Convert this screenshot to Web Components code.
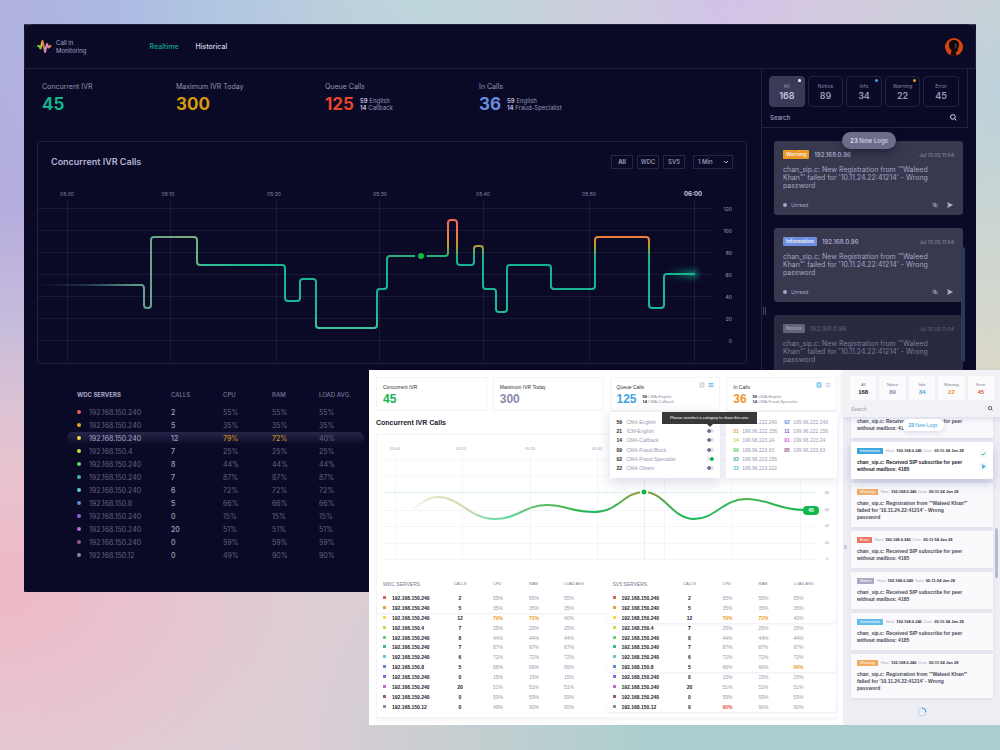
<!DOCTYPE html>
<html lang="en">
<head>
<meta charset="utf-8">
<title>Call in Monitoring</title>
<style>
body { margin: 0; }
</style>
</head>
<body>
<monitor-desktop></monitor-desktop>
<script>
function component(tag, css, markup) {
  const template = document.createElement('template');
  customElements.define(tag, class extends HTMLElement {
    connectedCallback() {
      if (this.shadowRoot) return;
      const root = this.attachShadow({ mode: 'open' });
      template.innerHTML = `<style>*{box-sizing:border-box}${css}</style>` + markup(this);
      root.append(template.content.cloneNode(true));
    }
  });
}

const DOTS = ['#d9694c', '#eaa13a', '#f1dc4b', '#c0e04a', '#65d66b', '#3fb8a0', '#5fc9d6', '#6488dd', '#8e63dc', '#cc66d8', '#97588f', '#8a8aa8'];
const SERVERS = [
  ['192.168.150.240', 2, '55%', '55%', '55%'], ['192.168.150.240', 5, '35%', '35%', '35%'],
  ['192.168.150.240', 12, '79%', '72%', '40%'], ['192.168.150.4', 7, '25%', '25%', '25%'],
  ['192.168.150.240', 8, '44%', '44%', '44%'], ['192.168.150.240', 7, '87%', '87%', '87%'],
  ['192.168.150.240', 6, '72%', '72%', '72%'], ['192.168.150.8', 5, '66%', '66%', '66%'],
  ['192.168.150.240', 0, '15%', '15%', '15%'], ['192.168.150.240', 20, '51%', '51%', '51%'],
  ['192.168.150.240', 0, '59%', '59%', '59%'], ['192.168.150.12', 0, '49%', '90%', '90%']
];

/* ---------- brand and navigation ---------- */
component('brand-mark', `
  :host{display:flex;align-items:center;gap:4px;font-size:6px;line-height:8px;color:#a3a2c0}
  svg{width:15px;height:15px;display:block}
`, () => `
  <svg viewBox="0 0 30 30" fill="none" stroke-width="4" stroke-linejoin="round" stroke-linecap="round" aria-hidden="true">
    <defs><linearGradient id="g" x1="0" x2="1"><stop offset="0" stop-color="#58c84c"/><stop offset=".2" stop-color="#8fc83c"/><stop offset=".3" stop-color="#f0b429"/><stop offset=".45" stop-color="#ee6a3a"/><stop offset=".62" stop-color="#b79ae8"/><stop offset=".8" stop-color="#e8798a"/><stop offset="1" stop-color="#f09a4a"/></linearGradient></defs>
    <path stroke="url(#g)" d="M2 14l2 0 3 5 4-15 5 22 4-16 3 7 4-3"/>
  </svg>
  <span>Call in<br>Monitoring</span>`);

component('user-avatar', `
  :host{display:block}
  svg{display:block;width:18px;height:18px}
`, () => `
  <svg viewBox="0 0 36 36" role="img" aria-label="Profile"><circle cx="18" cy="18" r="18" fill="#d4450f"/>
  <path fill="#15090c" d="M8 15c-1-8 5-12 12-11 6 1 9 6 8 12l-2 6c0 4-2 6-5 7l3 6q-6 2-13-1l2-9c-3-3-5-6-5-10z"/>
  <path fill="#5b5050" d="M20 11l4 1-1 5 1 3-3 2-2-5z" opacity=".6"/></svg>`);

component('top-bar', `
  :host{display:flex;align-items:center;height:45px;padding:0 12px;border:1px solid #1e1e3b;border-radius:9px 9px 0 0;box-sizing:border-box}
  nav{display:flex;gap:17px;flex:1;padding-left:63px;font-size:7px;font-weight:500}
  a{color:#dcdbea;text-decoration:none}
  a[aria-current]{color:#12a386}
`, () => `
  <brand-mark></brand-mark>
  <nav><a href="#realtime" aria-current="page">Realtime</a><a href="#historical">Historical</a></nav>
  <user-avatar></user-avatar>`);

/* ---------- figures at the top ---------- */
component('stat-figure', `
  :host{display:block;color:#9695b3}
  h3{margin:0 0 2px;font-size:7px;line-height:10px;font-weight:400}
  div{display:flex;align-items:center;gap:6px;height:20px}
  strong{font-size:17px;line-height:20px;font-weight:700;color:var(--figure)}
  slot{display:block;font-size:6px;line-height:7px}
`, el => `<h3>${el.getAttribute('label')}</h3><div><strong>${el.getAttribute('value')}</strong><slot></slot></div>`);

/* ---------- dark chart ---------- */
component('step-chart', `
  :host{display:block}
  svg{display:block;width:100%;height:auto}
  text{font-size:5px;fill:#8d8cab;text-anchor:middle}
  .y text{font-weight:500;text-anchor:end}
  .now{font-size:6px;font-weight:700;fill:#c9c8e2}
  .grid path{stroke:#8c8cc8;stroke-opacity:.12}
`, () => {
  const xs = [67, 170, 276, 379, 483, 589, 694], ys = [208, 230, 252, 274, 296, 318, 340];
  const pts = [[40, 285], [144, 285], [144, 308], [151, 308], [151, 237], [197, 237], [197, 265], [285, 265], [285, 301], [300, 301], [300, 279], [316, 279], [316, 328], [377, 328], [377, 289], [387, 289], [387, 256], [448, 256], [448, 220], [457, 220], [457, 265], [474, 265], [474, 246], [483, 246], [483, 289], [496, 289], [496, 312], [507, 312], [507, 265], [551, 265], [551, 289], [595, 289], [595, 237], [649, 237], [649, 308], [664, 308], [664, 274], [695, 274]];
  let d = `M${pts[0]}`;
  for (let i = 1; i < pts.length - 1; i++) {
    const [ax, ay] = pts[i - 1], [x, y] = pts[i], [bx, by] = pts[i + 1], r = 3;
    d += `L${x - Math.sign(x - ax) * r} ${y - Math.sign(y - ay) * r}Q${x} ${y} ${x + Math.sign(bx - x) * r} ${y + Math.sign(by - y) * r}`;
  }
  d += `L${pts[pts.length - 1]}`;
  return `<svg viewBox="38 169 708 194" role="img" aria-label="Concurrent IVR calls from 05:00 to 06:00">
    <defs>
      <linearGradient id="v" gradientUnits="userSpaceOnUse" x1="0" x2="0" y1="218" y2="330">
        <stop offset="0" stop-color="#ee6258"/><stop offset=".17" stop-color="#ee8040"/><stop offset=".21" stop-color="#d89428"/><stop offset=".26" stop-color="#a5a036"/><stop offset=".33" stop-color="#2cb07c"/><stop offset=".42" stop-color="#12b48f"/><stop offset=".85" stop-color="#1db993"/><stop offset="1" stop-color="#42c79f"/>
      </linearGradient>
      <linearGradient id="h" gradientUnits="userSpaceOnUse" x1="38" x2="290" y1="0" y2="0">
        <stop offset="0" stop-color="#5f9f93" stop-opacity="0"/><stop offset=".18" stop-color="#5f9f93" stop-opacity=".25"/><stop offset=".4" stop-color="#5f9f93"/><stop offset=".62" stop-color="#7fae78"/><stop offset=".66" stop-color="#2fbd98"/><stop offset="1" stop-color="#12b48f"/>
      </linearGradient>
      <clipPath id="a"><path d="M38 169h247v193H38z"/></clipPath><clipPath id="b"><path d="M285 169h461v193H285z"/></clipPath>
      <filter id="glow" x="-50%" y="-400%" width="200%" height="900%"><feGaussianBlur stdDeviation="3"/></filter>
      <linearGradient id="e" x1="0" x2="1"><stop offset="0" stop-color="#12b48f" stop-opacity="0"/><stop offset="1" stop-color="#14d2a0" stop-opacity=".8"/></linearGradient>
    </defs>
    <g class="grid">${ys.map(y => `<path d="M38 ${y}.5H712"/>`).join('')}${xs.map(x => `<path d="M${x}.5 200V362"/>`).join('')}</g>
    <rect x="668" y="271" width="29" height="6" fill="url(#e)" filter="url(#glow)"/>
    <g fill="none" stroke-width="2"><path clip-path="url(#a)" stroke="url(#h)" d="${d}"/><path clip-path="url(#b)" stroke="url(#v)" d="${d}"/></g>
    <circle cx="421" cy="256" r="6" fill="#0a0a26"/><circle cx="421" cy="256" r="3" fill="#10b94b"/>
    ${[67, 168, 274, 380, 483, 589].map((x, i) => `<text x="${x}" y="196">05:${i}0</text>`).join('')}
    <text class="now" x="693" y="196">06:00</text>
    <g class="y">${ys.map((y, i) => `<text x="732" y="${y + 3}">${120 - i * 20}</text>`).join('')}</g>
  </svg>`;
});

component('chart-panel', `
  :host{display:block;margin:0 14px 0 13px;border:1px solid #22223e;border-radius:4px}
  header{display:flex;align-items:center;gap:4px;padding:13px 13px 0}
  h2{flex:1;margin:0;font-size:9px;line-height:14px;font-weight:600;color:#b4b3d4}
  button,select{height:14px;border:1px solid #26263f;background:none;color:#a3a2c0;font:500 6px/8px Inter,sans-serif;padding:0;border-radius:0}
  button{width:22px}
  button:first-of-type{color:#c9c8e2}
  label{position:relative;margin-left:4px;display:block}
  select{appearance:none;width:40px;padding:0 4px;display:block}
  svg{position:absolute;right:4px;top:5px;width:6px;height:4px;pointer-events:none}
`, () => `
  <header><h2>Concurrent IVR Calls</h2>
    <button>All</button><button>WDC</button><button>SV5</button>
    <label><select aria-label="Interval"><option>1 Min</option></select>
    <svg viewBox="0 0 6 4" fill="none" stroke="#a3a2c0"><path d="M1 1l2 2 2-2"/></svg></label>
  </header>
  <step-chart></step-chart>`);

component('dark-servers', `
  :host{display:block;padding:18px 0 30px 43px}
  table{border-collapse:collapse;table-layout:fixed;width:297px;font-size:7px;line-height:9px;color:#62627f}
  th{height:24px;padding:0;text-align:left;font-size:6px;font-weight:500;color:#77769a}
  th:first-child{padding-left:10px;font-weight:700;color:#a9a8c9}
  td{height:13px;padding:0}
  td:first-child{padding-left:10px}
  td:nth-child(2){color:#a3a2c4;font-weight:500}
  i{display:inline-block;width:4px;height:4px;border-radius:50%;margin-right:8px;vertical-align:1px}
  .on td{background:linear-gradient(#26264a,#0a0a26)}
  .on td:first-child{border-radius:6px 0 0 6px;color:#a9a8c9}
  .on td:last-child{border-radius:0 6px 6px 0}
  .on td:nth-child(3),.on td:nth-child(4){color:#c98a1c;font-weight:500}
`, () => `<table><colgroup><col style="width:104px"><col style="width:52px"><col style="width:49px"><col style="width:47px"><col></colgroup>
  <thead><tr><th>WDC SERVERS</th><th>CALLS</th><th>CPU</th><th>RAM</th><th>LOAD AVG.</th></tr></thead>
  <tbody>${SERVERS.map((r, i) => `<tr${i == 2 ? ' class="on"' : ''}><td><i style="background:${DOTS[i]}"></i>${r[0]}</td>${r.slice(1).map(v => `<td>${v}</td>`).join('')}</tr>`).join('')}</tbody></table>`);

/* ---------- dark log column ---------- */
component('log-filter', `
  :host{display:block}
  button{position:relative;display:block;width:100%;height:31px;padding:0;border:1px solid #24243f;border-radius:4px;background:none;color:#8584a3;font:400 5px/8px Inter,sans-serif}
  b{display:block;font-size:9px;line-height:12px;font-weight:600;color:#9a99b8}
  :host([selected]) button{background:#3a3a57;border-color:#3a3a57;color:#9a99b8}
  :host([selected]) b{color:#c3c2e0}
  i{position:absolute;right:3px;top:2px;width:3px;height:3px;border-radius:50%;background:var(--dot)}
`, el => `<button>${el.getAttribute('label')}<b>${el.getAttribute('count')}</b>${el.hasAttribute('dot') ? '<i></i>' : ''}</button>`);

component('log-entry', `
  :host{display:block;padding:9px 9px 6px;border-radius:3px;background:#38384f;color:#a5a4c3}
  :host([faded]){background:#292940;color:#7d7c98}
  header,footer{display:flex;align-items:center}
  header{height:9px;gap:5px;font-size:6px}
  mark{border-radius:1px;background:var(--tag);color:#f2f0f5;font-size:5px;line-height:9px;font-weight:600;padding:0 3px}
  b{flex:1;font-weight:600}
  :host([faded]) b{color:#55556f}
  :host([faded]) mark{color:#a3a2bb}
  time{font-size:5px;color:#85849f;font-weight:500}
  :host([faded]) time{color:#5d5d79}
  p{margin:7px 0 11px;padding-right:20px;font-size:7px;line-height:8px}
  footer{height:8px;gap:9px;font-size:5px;padding-right:1px}
  footer span{flex:1;display:flex;align-items:center;gap:4px}
  footer span::before{content:"";width:4px;height:4px;border-radius:50%;background:#a5a4c3}
  svg{width:6px;height:6px;fill:none;stroke:#b4b3d0}
`, el => `<header><mark>${el.getAttribute('kind')}</mark><b>192.168.0.96</b><time>Jul 15 05:11:54</time></header>
  <p><slot></slot></p>
  <footer><span>Unread</span>
  <svg viewBox="0 0 12 12" stroke-width="1.2"><path d="M1 6q5-7 10 0-5 7-10 0M2 1l9 10"/><circle cx="6" cy="6" r="1" /></svg>
  <svg viewBox="0 0 12 12" style="fill:#b4b3d0"><path d="M1 1l10 5-10 5 2-5z"/></svg></footer>`);

component('search-field', `
  :host{display:flex;align-items:center}
  input{flex:1;min-width:0;border:0;outline:0;padding:0;background:none;font:inherit;color:inherit}
  input::placeholder{color:inherit;opacity:1}
  svg{width:var(--glass,7px);height:var(--glass,7px);fill:none;stroke:var(--ink,#e4e3f0);stroke-width:1.6}
`, () => `<input type="search" placeholder="Search" aria-label="Search logs"><svg viewBox="0 0 12 12"><circle cx="5" cy="5" r="4"/><path d="M8 8l3 3"/></svg>`);

component('dark-logs', `
  :host{display:block;position:relative;border-left:1px solid #22223e}
  .tools{margin-right:8px;padding:7px 8px 0 7px;border-right:1px solid #22223e;border-bottom:1px solid #22223e}
  .tabs{display:grid;grid-template-columns:repeat(5,1fr);gap:3px}
  search-field{height:20px;padding:0 2px 0 1px;font-size:6px;font-weight:500;color:#a3a2c0}
  .list{display:flex;flex-direction:column;gap:13px;padding:13px 13px 0 12px}
  .new{position:absolute;left:80px;top:63px;height:17px;width:54px;border:0;border-radius:9px;background:#6d6c8b;color:#d5d4e6;font:500 6px/17px Inter,sans-serif;padding:0;box-shadow:0 3px 8px #0a0a2680;white-space:nowrap}
  .bar{position:absolute;right:11px;top:178px;width:4px;height:115px;border-radius:2px;background:#2b3858}
  .grip{position:absolute;left:1px;top:238px;width:3px;height:8px;border:solid #44445f;border-width:0 1px}
`, () => `
  <div class="tools"><div class="tabs">
    <log-filter label="All" count="168" dot selected style="--dot:#fff"></log-filter>
    <log-filter label="Notice" count="89"></log-filter>
    <log-filter label="Info" count="34" dot style="--dot:#3ea6dc"></log-filter>
    <log-filter label="Warning" count="22" dot style="--dot:#ee9a22"></log-filter>
    <log-filter label="Error" count="45"></log-filter></div>
    <search-field></search-field></div>
  <div class="list">${[['Warning', '#ee9a22', ''], ['Information', '#6d8fe0', ''], ['Notice', '#63627d', 'faded']].map(([k, c, f]) =>
    `<log-entry kind="${k}" style="--tag:${c}" ${f}>chan_sip.c: New Registration from '"Waleed Khan"' failed for '10.11.24.22:41214' - Wrong password</log-entry>`).join('')}</div>
  <button class="new"><b>23</b> New Logs</button><div class="bar"></div><div class="grip"></div>`);

component('dark-dashboard', `
  :host{display:block;margin:0 24px;background:#0a0a26;font-family:Inter,sans-serif;box-shadow:inset 0 1px #3a3a56;border-radius:1px}
  .body{display:grid;grid-template-columns:1fr 215px}
  .stats{display:grid;grid-template-columns:134fr 149fr 154fr 282fr;padding:13px 0 27px 18px}
  b{color:#b4b3d4}
`, () => `
  <top-bar></top-bar>
  <div class="body"><main>
    <div class="stats">
      <stat-figure label="Concurrent IVR" value="45" style="--figure:#12b48a"></stat-figure>
      <stat-figure label="Maximum IVR Today" value="300" style="--figure:#d8980f"></stat-figure>
      <stat-figure label="Queue Calls" value="125" style="--figure:#e8452a"><b>59</b> English<br><b>14</b> Callback</stat-figure>
      <stat-figure label="In Calls" value="36" style="--figure:#6a8de0"><b>59</b> English<br><b>14</b> Fraud-Specialist</stat-figure>
    </div>
    <chart-panel></chart-panel>
    <dark-servers></dark-servers></main>
  <dark-logs></dark-logs></div>`);

/* ---------- light window ---------- */
component('view-toggle', `
  :host{display:flex;gap:3px}
  button{border:0;padding:0;background:none;width:6px;height:6px;display:block;color:#c6c6d6}
  .on{color:#56b4e4}
  svg{display:block;width:6px;height:6px;fill:none;stroke:currentColor;stroke-width:1.6}
`, el => { const list = el.getAttribute('view') == 'list'; return `
  <button aria-label="By server" class="${list ? '' : 'on'}"><svg viewBox="0 0 12 12"><path d="M2 2q4-2 8 0v8q-4 2-8 0zM2 4h8M2 8h8"/></svg></button>
  <button aria-label="By category" class="${list ? 'on' : ''}"><svg viewBox="0 0 12 12"><path d="M1 3h10M1 6h10M1 9h10"/></svg></button>`; });

component('light-stat', `
  :host{display:block;position:relative;height:34px;padding:6px 6px 0;border:1px solid #f4f4f8;background:#fff;color:#2f2f3c}
  h3{margin:0;font-size:5px;line-height:6px;font-weight:400}
  div{display:flex;align-items:center;gap:6px;height:18px}
  strong{font-size:12px;color:var(--figure)}
  slot{display:block;font-size:4px;line-height:5px;color:#8c8ca6}
  view-toggle{position:absolute;right:5px;top:4px}
  slot[name=list]{position:absolute;top:33px;left:-1px;right:-1px;z-index:2}
`, el => `<h3>${el.getAttribute('label')}</h3><div><strong>${el.getAttribute('value')}</strong><slot></slot></div>
  ${el.hasAttribute('view') ? `<view-toggle view="${el.getAttribute('view')}"></view-toggle><slot name="list"></slot>` : ''}`);

component('category-list', `
  :host{display:block;background:#fff;border-top:1px solid #efeff4;box-shadow:0 5px 12px #5a5a9638;padding:5px 6px 5px 7px;box-sizing:border-box}
  label{display:grid;grid-template-columns:10px 1fr auto;align-items:center}
  .rows{display:grid;grid-auto-rows:1fr;height:56px;font-size:5px;line-height:6px;color:#9a9ab2}
  b{color:#22222c}
  input{appearance:none;margin:0;width:7px;height:4px;border-radius:2px;background:radial-gradient(circle at 2px 2px,#74749a 2px,#e1e1ea 2px)}
  input:checked{background:radial-gradient(circle at 5px 2px,#10b94b 2px,#e1e1ea 2px)}
`, () => `<div class="rows">${[['59', 'CMA-English', 1], ['21', 'ICM-English'], ['14', 'CMA-Callback'], ['09', 'CMA-Fraud-Block'], ['02', 'CMA-Fraud-Specialist', 1], ['22', 'CMA-Others']].map(([n, t, on]) =>
  `<label><b>${n}</b>${t}<input type="checkbox"${on ? ' checked' : ''}></label>`).join('')}</div>`);

component('address-list', `
  :host{display:block;background:#fff;border-top:1px solid #efeff4;box-shadow:0 3px 8px #5a5a9622;padding:5px 6px 5px 7px;box-sizing:border-box}
  .rows{display:grid;grid-auto-flow:column;grid-template-rows:repeat(6,1fr);grid-template-columns:51px 1fr;height:56px;font-size:5px;line-height:6px;color:#9a9ab2}
  span{display:grid;grid-template-columns:9px 1fr;align-items:center}
`, () => `<div class="rows">${[['59', '222.240', '#e2694a'], ['21', '222.156', '#eaa13a'], ['14', '223.24', '#b4d83e'], ['09', '223.63', '#5ccf5c'], ['02', '223.156', '#36b095'], ['22', '223.222', '#52c5d0'], ['02', '222.240', '#5f86dc'], ['11', '222.156', '#7a55d6'], ['01', '223.24', '#c95bd0'], ['05', '223.63', '#8e4d80']].map(([n, a, c]) =>
  `<span><b style="color:${c}">${n}</b>199.96.${a}</span>`).join('')}</div>`);

component('wave-chart', `
  :host{display:block}
  svg{display:block;width:100%;height:auto}
  text{font-size:4px;fill:#9a9ab2;text-anchor:middle}
  .grid path{stroke:#f6f6fa}
  .pill{font-size:5px;font-weight:700;fill:#fff}
`, () => `<svg viewBox="377 435 459 140" role="img" aria-label="Concurrent IVR calls">
  <defs><linearGradient id="w" gradientUnits="userSpaceOnUse" x1="408" x2="802" y1="0" y2="0">
    <stop offset="0" stop-color="#dcd9b0" stop-opacity="0"/><stop offset=".08" stop-color="#dfdfb4"/><stop offset=".15" stop-color="#c9d8b0"/><stop offset=".2" stop-color="#83dcb0"/><stop offset=".26" stop-color="#5fd39a"/><stop offset=".34" stop-color="#5cb861"/><stop offset=".4" stop-color="#4cb552"/><stop offset=".47" stop-color="#19b95a"/><stop offset=".53" stop-color="#3fae50"/><stop offset=".57" stop-color="#8a9f3f"/><stop offset=".62" stop-color="#8a9f3f"/><stop offset=".66" stop-color="#3fae50"/><stop offset=".73" stop-color="#19b95a"/><stop offset=".86" stop-color="#4cb552"/><stop offset="1" stop-color="#12b84a"/></linearGradient></defs>
  <g class="grid">${[459, 476, 510, 526, 543, 559].map(y => `<path d="M384 ${y}.5H815"/>`).join('')}${[395, 462, 530, 597, 664, 731, 800].map(x => `<path d="M${x}.5 455V560"/>`).join('')}</g>
  <path d="M385 492.5H816" stroke="#bfe3ea" stroke-dasharray="1 1"/><path d="M644.5 478V560" stroke="#cdebe6" stroke-dasharray="1 1"/>
  <path fill="none" stroke="url(#w)" stroke-width="2" d="M410 510C420 506 425 497 438 497C460 497 470 519 494 519C518 519 525 505 547 505C565 505 572 512 595 512C618 512 624 492 644 492C665 492 672 519 694 519C716 519 722 499 747 499C768 499 778 510 804 510"/>
  <circle cx="644" cy="492" r="4" fill="#fff"/><circle cx="644" cy="492" r="2.5" fill="#10b94b"/>
  <rect x="803" y="506" width="16" height="9" rx="4" fill="#10b94b"/><text class="pill" x="811" y="512">45</text>
  ${[395, 461, 530, 597].map((x, i) => `<text x="${x}" y="450">05:${i}0</text>`).join('')}
  ${[80, 60, 40, 20, 0].map((v, i) => `<text x="827" y="${[494, 511, 527, 544, 560][i]}">${v}</text>`).join('')}
</svg>`);

component('light-servers', `
  :host{display:block}
  table{border-collapse:collapse;table-layout:fixed;width:100%;height:137px;font-size:5px;line-height:6px;color:#9a9ab0}
  th{height:18px;padding:0;font-size:4px;font-weight:400;text-align:left;color:#77778f}
  th:first-child{padding-left:6px;font-size:5px}
  td{padding:0}
  th:nth-child(2),td:nth-child(2){text-align:center;padding-right:20px}
  td:first-child{padding-left:6px}
  td:nth-child(-n+2){color:#22222c;font-weight:700}
  i{display:inline-block;width:3px;height:3px;margin-right:6px;vertical-align:1px}
  .card{box-shadow:0 1px 2px #5a5a961a}
  .warn{color:#e9a02a;font-weight:700}.bad{color:#e4573d;font-weight:700}
`, el => { const sv = el.getAttribute('site') == 'SV5', cards = sv ? [2, 7, 11] : [1];
  const cls = (r, c) => r == 2 && (c == 1 || c == 2) ? 'warn' : sv && r == 7 && c == 3 ? 'warn' : sv && r == 11 && c == 1 ? 'bad' : '';
  return `<table><colgroup><col style="width:70px"><col style="width:46px"><col style="width:36px"><col style="width:35px"><col></colgroup>
  <thead><tr><th>${el.getAttribute('site')} SERVERS</th><th>CALLS</th><th>CPU</th><th>RAM</th><th>LOAD AVG.</th></tr></thead>
  <tbody>${SERVERS.map((r, i) => `<tr class="${cards.includes(i) ? 'card' : ''}"><td><i style="background:${DOTS[i]}"></i>${r[0]}</td>${r.slice(1).map((v, c) =>
    `<td class="${cls(i, c)}">${sv && i == 11 && c == 1 ? '90%' : v}</td>`).join('')}</tr>`).join('')}</tbody></table>`; });

component('light-filter', `
  :host{display:block}
  button{display:block;width:100%;height:24px;border:0;padding:1px 0 0;background:#fbfbfd;color:#77778f;font:400 4px/7px "Liberation Sans",sans-serif}
  b{display:block;font-size:6px;line-height:8px;color:var(--ink)}
`, el => `<button>${el.getAttribute('label')}<b>${el.getAttribute('count')}</b></button>`);

component('light-log', `
  :host{display:flex;padding:5px 6px 6px;background:#fafafd;color:#4a4a58;box-shadow:0 1px 4px #5a5a9622}
  :host([active]){background:#fff;color:#22222c;box-shadow:0 4px 10px #5a5a9650;position:relative}
  :host([scrolled]){padding-top:1px}
  section{flex:1;min-width:0}
  header{display:flex;align-items:center;gap:2px;height:8px;margin-bottom:4px;font-size:4px;line-height:6px;color:#a9a9bf;white-space:nowrap}
  mark{background:var(--tag);color:#fff;padding:0 3px;margin-right:1px}
  b{color:#2f2f3c}
  p{margin:0;max-width:114px;font-size:5px;line-height:7px;font-weight:700}
  .acts{display:flex;flex-direction:column;gap:4px;margin:2px -1px 0 0}
  button{width:9px;height:9px;border:0;border-radius:50%;padding:2px;background:#f5fafc}
  svg{display:block;width:5px;height:5px}
`, el => `<section>${el.hasAttribute('scrolled') ? '' : `<header><mark>${el.getAttribute('kind')}</mark>Host <b>192.168.0.240</b> Date <b>05:11:54 Jan 28</b></header>`}<p><slot></slot></p></section>
  ${el.hasAttribute('active') ? `<div class="acts"><button aria-label="Mark read"><svg viewBox="0 0 10 10" fill="none" stroke="#35c468" stroke-width="2"><path d="M1 6l3 2 5-5"/></svg></button>
  <button aria-label="Forward"><svg viewBox="0 0 10 10" fill="#3ea6dc"><path d="M1 0l9 5-9 5 2-5z"/></svg></button></div>` : ''}`);

component('light-logs', `
  :host{display:flex;flex-direction:column;position:relative;background:#eeeff5}
  .tools{position:relative;z-index:1;padding:6px 6px 0 7px;background:#f1f1f6;box-shadow:0 2px 6px #5a5a9630}
  .tabs{display:grid;grid-template-columns:repeat(5,1fr);gap:3px}
  search-field{height:17px;padding:0 1px;font-size:5px;color:#9a9ab0;--ink:#22222c;--glass:5px}
  .list{display:flex;flex-direction:column;gap:4px;padding:0 7px 0 8px}
  .new{position:absolute;z-index:2;left:59px;top:49px;width:42px;height:12px;border:0;border-radius:6px;background:#fff;color:#3ea6dc;font:400 5px/12px "Liberation Sans",sans-serif;padding:0;box-shadow:0 2px 5px #5a5a9630;white-space:nowrap}
  .spin{display:block;margin:9px auto 7px;width:10px;height:10px}
  .bar{position:absolute;right:2px;top:158px;width:3px;height:50px;border-radius:2px;background:#b9bad1}
  .grip{position:absolute;left:1px;top:175px;width:3px;height:4px;background:#cdcddd}
`, () => { const a = 'chan_sip.c: Received SIP subscribe for peer<br>without mailbox: 4185', b = `chan_sip.c: Registration from '"Waleed Khan"' failed for '10.11.24.22:41214' - Wrong<br>password`;
  return `<div class="tools"><div class="tabs">
    <light-filter label="All" count="168" style="--ink:#22222c"></light-filter><light-filter label="Notice" count="89" style="--ink:#8b8ba9"></light-filter>
    <light-filter label="Info" count="34" style="--ink:#3ea6dc"></light-filter><light-filter label="Warning" count="22" style="--ink:#f0962e"></light-filter>
    <light-filter label="Error" count="45" style="--ink:#e4573d"></light-filter></div><search-field></search-field></div>
  <div class="list">${[['Notice', '#a9a9c2', a, 'scrolled'], ['Information', '#3ea6dc', a, 'active'], ['Warning', '#f0b06a', b], ['Error', '#ee7760', a], ['Notice', '#a9a9c2', a], ['Information', '#62bce8', a], ['Warning', '#f0ac5c', b]].map(([k, c, t, s]) =>
    `<light-log kind="${k}" style="--tag:${c}" ${s || ''}>${t}</light-log>`).join('')}</div>
    <svg class="spin" viewBox="0 0 20 20" fill="none" stroke-width="2" aria-label="Loading"><circle cx="10" cy="10" r="8" stroke="#b5d8ee"/><path stroke="#3e9ed8" d="M10 2a8 8 0 0 1 8 8"/></svg>
  <button class="new"><b>23</b> New Logs</button><div class="bar"></div><div class="grip"></div>`; });

component('light-dashboard', `
  :host{display:grid;grid-template-columns:1fr 157px;background:#fff;font-family:"Liberation Sans",sans-serif}
  main{position:relative;padding:7px 6px 7px 7px}
  .stats{display:grid;grid-template-columns:repeat(4,1fr);gap:6px}
  h2{margin:0;padding:6px 0 5px;font-size:7px;line-height:12px;color:#22222c}
  .card{border:1px solid #f3f3f8;box-shadow:0 2px 3px #5a5a9610}
  .tables{display:grid;grid-template-columns:1fr 1fr;padding-bottom:5px}
  b{color:#22222c}
  .tip{position:absolute;z-index:3;left:293px;top:42px;height:12px;padding:0 4px;background:#383838;color:#fff;font-size:4px;line-height:12px;white-space:nowrap;width:95px;text-align:center}
  .tip::after{content:"";position:absolute;left:45px;top:12px;border:3px solid transparent;border-top-color:#383838}
`, () => `
  <main><div class="stats">
    <light-stat label="Concurrent IVR" value="45" style="--figure:#12b84a"></light-stat>
    <light-stat label="Maximum IVR Today" value="300" style="--figure:#8b8ba9"></light-stat>
    <light-stat label="Queue Calls" value="125" view="list" style="--figure:#3ea6dc"><b>59</b> CMA-English<br><b>14</b> CMA-Callback<category-list slot="list"></category-list></light-stat>
    <light-stat label="In Calls" value="36" view="servers" style="--figure:#f0962e"><b>59</b> CMA-English<br><b>14</b> CMA-Fraud-Specialist<address-list slot="list"></address-list></light-stat>
  </div>
  <h2>Concurrent IVR Calls</h2>
  <div class="card"><wave-chart></wave-chart><div class="tables"><light-servers site="WDC"></light-servers><light-servers site="SV5"></light-servers></div></div>
  <div class="tip" role="tooltip">Please unselect a category to show this one.</div></main>
  <light-logs></light-logs>`);

component('monitor-desktop', `
  :host{display:block;position:relative;min-height:100vh;padding:24px 0;box-sizing:border-box;
    background:
      radial-gradient(ellipse 30% 30% at 42% 0,#bdd6dc,#bdd6dc00),
      radial-gradient(ellipse 30% 40% at 22% 0,#a9c0e4,#a9c0e400),
      radial-gradient(ellipse 30% 40% at 72% 0,#d1c2e8,#d1c2e800),
      radial-gradient(ellipse 25% 40% at 100% 12%,#bcd1da,#bcd1da00),
      radial-gradient(ellipse 62% 50% at 92% 100%,#a8cece 40%,#a8cece00),
      radial-gradient(ellipse 32% 34% at 0 78%,#efb8c6,#efb8c600),
      radial-gradient(ellipse 55% 55% at 0 10%,#b4acde 30%,#b4acde00),
      linear-gradient(90deg,#dfd0d8,#dccdd4 40%,#dddac8)}
  light-dashboard{position:absolute;left:369px;right:0;top:370px}
`, () => `<dark-dashboard></dark-dashboard><light-dashboard></light-dashboard>`);
</script>
</body>
</html>
